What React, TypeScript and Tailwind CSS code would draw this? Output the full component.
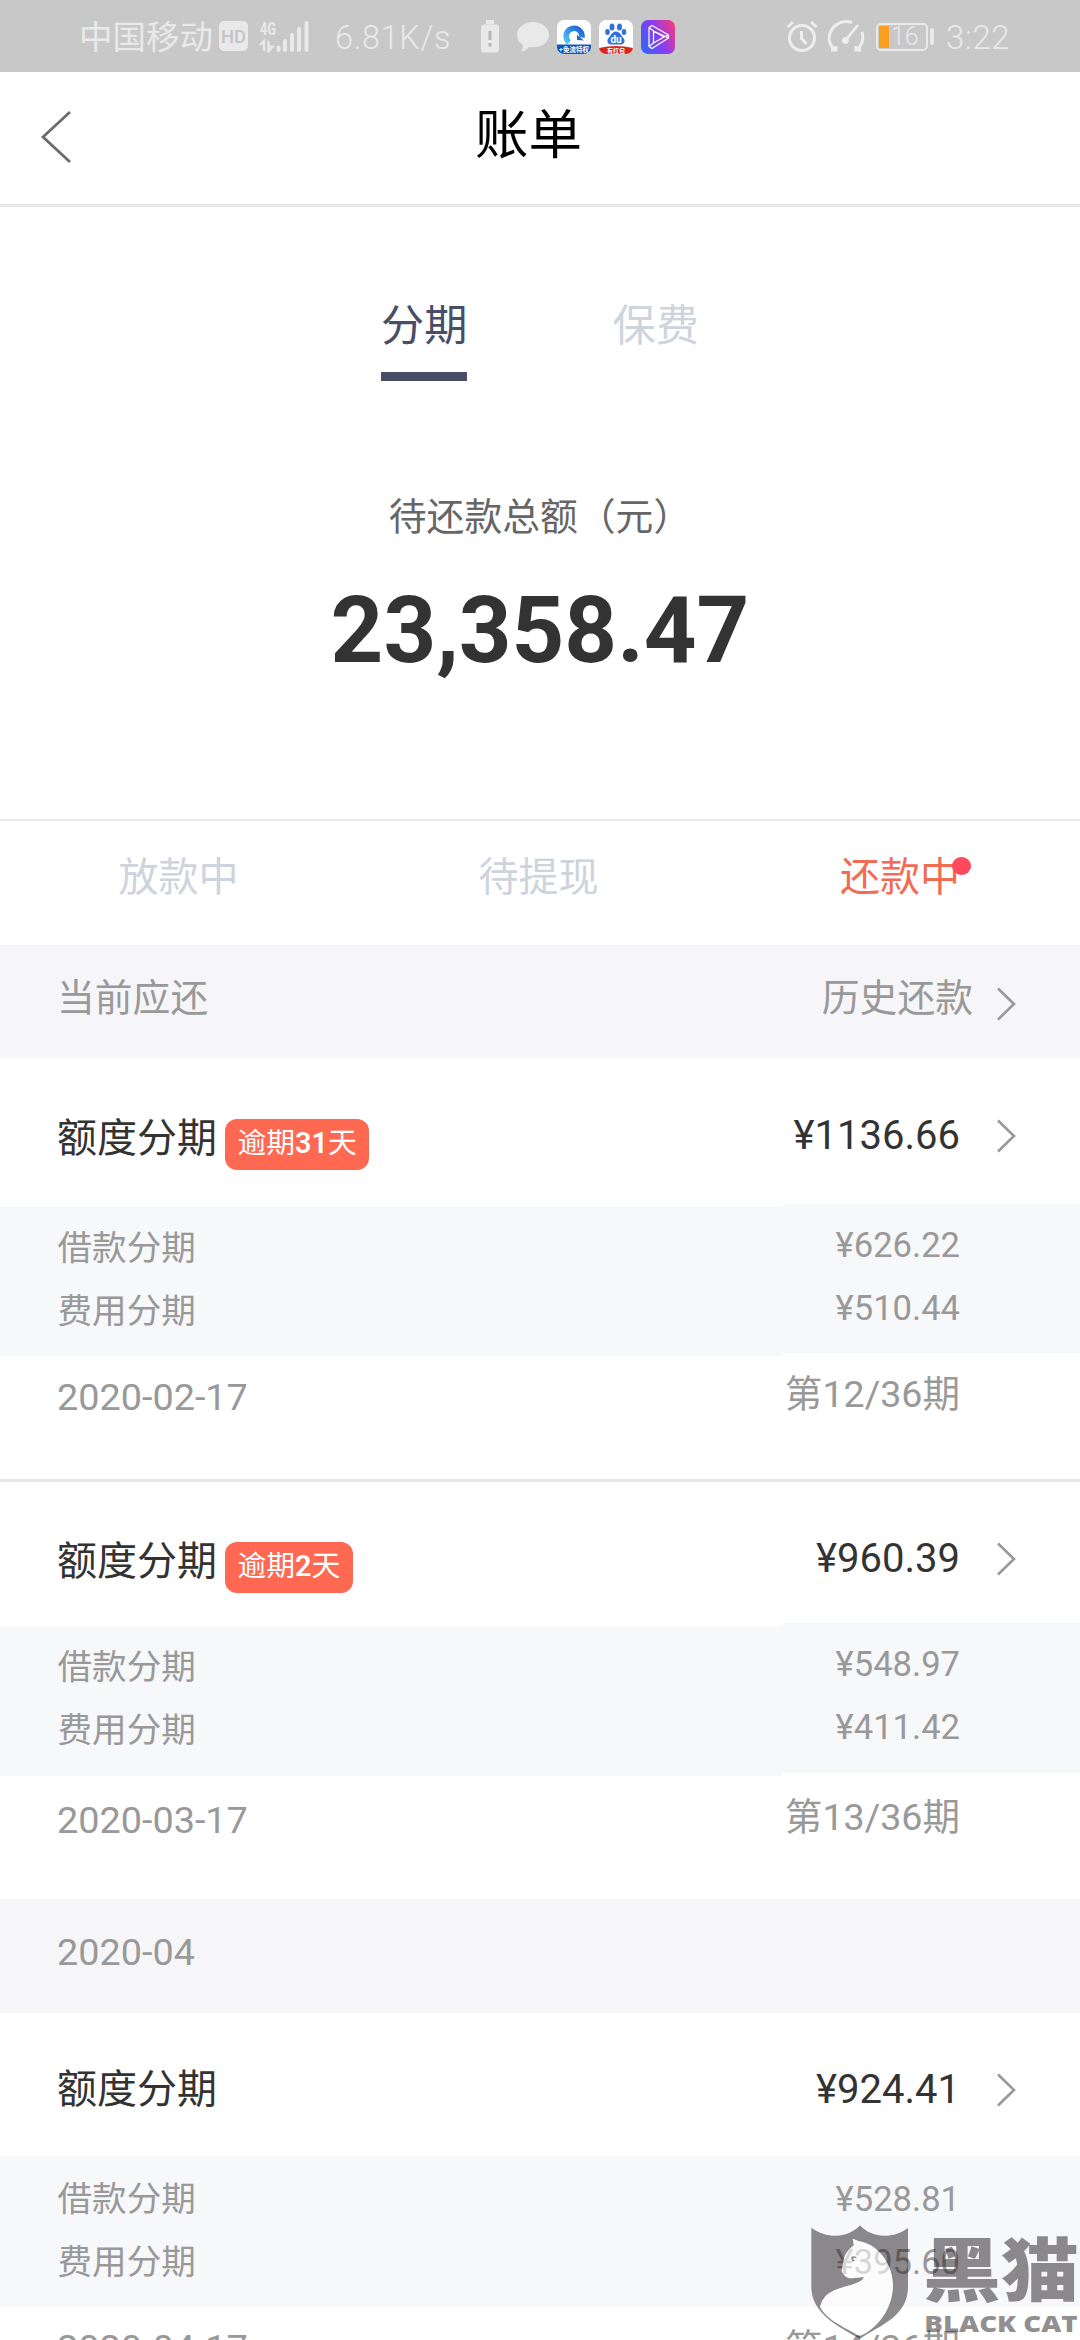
import React from "react";

type Bill = {
  overdueDays?: number;
  amount: string;
  loan: string;
  fee: string;
  date: string;
  period: string;
  row: string;
  titlePad: string;
  amountPad: string;
  leftHead: string;
  rightHead: string;
  detail: string;
  foot: string;
};

const bills: Bill[] = [
  {
    overdueDays: 31, amount: "¥1136.66", loan: "¥626.22", fee: "¥510.44",
    date: "2020-02-17", period: "第12/36期",
    row: "h-[424px] border-b-3 border-[#e8e8e8]",
    titlePad: "pt-[61px]", amountPad: "pt-[58px]",
    leftHead: "h-[149px]", rightHead: "h-[146px]",
    detail: "h-[149px] pt-[10px]", foot: "pt-[21px]",
  },
  {
    overdueDays: 2, amount: "¥960.39", loan: "¥548.97", fee: "¥411.42",
    date: "2020-03-17", period: "第13/36期",
    row: "h-[417px]",
    titlePad: "pt-[60px]", amountPad: "pt-[57px]",
    leftHead: "h-[144px]", rightHead: "h-[141px]",
    detail: "h-[150px] pt-[10px]", foot: "pt-[24px]",
  },
  {
    amount: "¥924.41", loan: "¥528.81", fee: "¥395.60",
    date: "2020-04-17", period: "第14/36期",
    row: "h-[327px]",
    titlePad: "pt-[57px]", amountPad: "pt-[57px]",
    leftHead: "h-[143px]", rightHead: "h-[143px]",
    detail: "h-[151px] pt-[12px]", foot: "pt-[21px]",
  },
];

function Chevron({ className = "" }: { className?: string }) {
  return (
    <svg className={`h-[34px] w-[20px] shrink-0 ${className}`} viewBox="0 0 20 34" fill="none">
      <path d="M2 1.5 18 17 2 32.5" stroke="#999" strokeWidth="2.6" />
    </svg>
  );
}

function BillRow({ b }: { b: Bill }) {
  return (
    <div className={`flex bg-white ${b.row}`}>
      <div className="flex w-[783px] flex-col">
        <div className={`flex shrink-0 items-start pl-[57px] ${b.leftHead} ${b.titlePad}`}>
          <span className="text-[40px] leading-[40px] text-[#333]">额度分期</span>
          {b.overdueDays && (
            <span className="ml-2 h-[51px] rounded-xl bg-[#ff6851] px-[12.5px] text-[28.8px] leading-[48px] text-white">
              逾期<b className="font-semibold">{b.overdueDays}</b>天
            </span>
          )}
        </div>
        <div className={`shrink-0 bg-[#f7f8fa] pl-[57.5px] text-[34.6px] leading-[63px] text-[#999] ${b.detail}`}>
          <p>借款分期</p>
          <p>费用分期</p>
        </div>
        <p className={`pl-[57px] text-[37.8px] leading-[40px] text-[#999] ${b.foot}`}>{b.date}</p>
      </div>
      <div className="flex flex-1 flex-col">
        <div className={`flex shrink-0 items-start justify-end pr-[64px] ${b.rightHead} ${b.amountPad}`}>
          <span className="text-[40px] leading-[40px] text-[#333]">{b.amount}</span>
          <Chevron className="mt-[3px] ml-[36px]" />
        </div>
        <div className={`shrink-0 bg-[#f7f8fa] pr-[120px] text-right text-[34.6px] leading-[63px] text-[#999] ${b.detail}`}>
          <p>{b.loan}</p>
          <p>{b.fee}</p>
        </div>
        <p className={`pr-[120px] text-right text-[37.6px] leading-[40px] whitespace-nowrap text-[#999] ${b.foot}`}>{b.period}</p>
      </div>
    </div>
  );
}

function StatusBar() {
  return (
    <header className="flex h-[72px] shrink-0 items-center bg-[#c8c8c8] pl-[79px] text-[#e9e9e9]">
      <span className="w-[139px] pt-[3px] text-[33.5px] leading-[44px] whitespace-nowrap">中国移动</span>
      <svg className="h-[32px] w-[31px]" viewBox="0 0 31 32">
        <rect x="1" y="1" width="29" height="30" rx="5" fill="#e9e9e9" />
        <text x="15.5" y="22.5" textAnchor="middle" fontSize="18.5" fontWeight="500" fill="#c4c4c4" fontFamily="Roboto">HD</text>
      </svg>
      <svg className="ml-[10px] h-[34px] w-[52px]" viewBox="0 0 52 34" fill="#e9e9e9">
        <text x="1" y="15.5" fontSize="19" fontWeight="700" fontFamily="Roboto" textLength="16" lengthAdjust="spacingAndGlyphs">4G</text>
        <path d="M1 26l4-4v10M9.500 22v10l4-4-4-1" stroke="#e9e9e9" strokeWidth="2.400" fill="none" />
        <path d="M19.500 28.500v2.500M26 22v9M33 16v15M40 10v21M47.500 4v27" stroke="#e9e9e9" strokeWidth="4" strokeLinecap="round" />
      </svg>
      <span className="ml-[24px] w-[116px] pt-[4px] text-[32.5px] leading-[40px] font-light whitespace-nowrap tracking-[0.6px]">6.81K/s</span>
      <svg className="ml-[30px] h-[34px] w-[18px]" viewBox="0 0 18 34">
        <rect x="5" y="1" width="8" height="4" fill="#e9e9e9" />
        <rect width="18" height="28" y="5.500" rx="3" fill="#e9e9e9" />
        <path d="M9 12v9M9 24v3.500" stroke="#b8b8b8" strokeWidth="3" />
      </svg>
      <svg className="mt-[2px] ml-[17px] h-[32px] w-[34px]" viewBox="0 0 34 32">
        <path d="M17 1C8 1 1 6.500 1 14c0 4.500 2 7.500 6 10 0 3-1 5-2 7 4-1 6-3 8-5 1 .2 2.500.3 4 .3 9 0 16-5 16-12.300S26 1 17 1Z" fill="#e9e9e9" />
      </svg>
      <svg className="mt-[2px] ml-[7px] h-[34px] w-[34px]" viewBox="0 0 34 34">
        <defs>
          <clipPath id="appA"><rect width="34" height="34" rx="7" /></clipPath>
          <linearGradient id="ring" x1="0" y1="1" x2="1" y2="0"><stop stopColor="#55c3f5" /><stop offset="1" stopColor="#1d62cf" /></linearGradient>
        </defs>
        <g clipPath="url(#appA)">
          <rect width="34" height="34" fill="#fff" />
          <path d="M12 22.500A8 8 0 1 1 25 17.500" stroke="url(#ring)" strokeWidth="5.500" fill="none" />
          <path d="M20 15l7 5.500-7-.500Z" fill="#2166cf" />
          <path d="M0 24.500h34V34H0Z" fill="#0c57b8" />
          <text x="17" y="31.500" textAnchor="middle" fontSize="6.500" fontWeight="700" fill="#fff" fontFamily="Noto Sans CJK SC">+免流特权</text>
        </g>
      </svg>
      <svg className="mt-[2px] ml-[8px] h-[34px] w-[34px]" viewBox="0 0 34 34">
        <defs><clipPath id="appB"><rect width="34" height="34" rx="7" /></clipPath></defs>
        <g clipPath="url(#appB)">
          <rect width="34" height="34" fill="#fff" />
          <g fill="#2f72dc">
            <ellipse cx="13" cy="7" rx="2.500" ry="3.500" /><ellipse cx="20.500" cy="7" rx="2.500" ry="3.500" />
            <ellipse cx="8.500" cy="12" rx="2.300" ry="3" /><ellipse cx="25" cy="12" rx="2.300" ry="3" />
            <path d="M17 11.500c4 0 5 4 7.500 6.500 2.500 3.500.5 7-4 6.500h-7c-4.500.5-6.500-3-4-6.500C12 15.500 13 11.500 17 11.500Z" />
          </g>
          <text x="17" y="23" textAnchor="middle" fontSize="10" fontWeight="700" fill="#fff" fontFamily="Roboto">du</text>
          <path d="M0 28Q17 24 34 28v6H0Z" fill="#d9261c" />
          <text x="17" y="32.500" textAnchor="middle" fontSize="6" fontWeight="700" fill="#fff" fontFamily="Noto Sans CJK SC">有红包</text>
        </g>
      </svg>
      <svg className="mt-[2px] ml-[8px] h-[34px] w-[34px]" viewBox="0 0 34 34">
        <defs>
          <linearGradient id="vid" x1="0" y1="0.700" x2="1" y2="0.200"><stop stopColor="#3b62f6" /><stop offset="0.500" stopColor="#8a3df0" /><stop offset="1" stopColor="#f53a86" /></linearGradient>
        </defs>
        <rect width="34" height="34" rx="7" fill="url(#vid)" />
        <path d="M8 7.500 11 5.500 27.500 15v3L11 28.500l-3-2ZM12.500 11v12L23 17ZM8 26.500 12.500 23M8 7.500l4.500 3.500M12.500 11l15 7M23 17l4.500-2" stroke="#fff" strokeWidth="1.200" fill="none" strokeLinejoin="round" />
      </svg>
      <svg className="ml-[111px] h-[34px] w-[32px]" viewBox="0 0 32 34" fill="none" stroke="#eee" strokeWidth="3">
        <circle cx="16" cy="19" r="12.500" />
        <path d="M15.500 12v7.500l5 5.500M1.500 8 7 3M30.500 8 25 3" />
      </svg>
      <svg className="ml-[9px] h-[34px] w-[38px]" viewBox="0 0 38 34" fill="none" stroke="#eee">
        <path d="M9 31.500C3 27 .5 20 3.500 13 7 5 16 .5 25 3.500M35 13c2 7 0 14.500-6 18.500M4 31h5v-4M34 31h-5v-4" strokeWidth="3" />
        <path d="M18 22 31 6" strokeWidth="2.600" />
        <circle cx="18.500" cy="21.500" r="3" fill="#eee" />
      </svg>
      <div className="mt-px ml-[11px] flex h-[28px] w-[52px] items-center rounded-[5px] border-2 border-[#e9e9e9] pl-px">
        <span className="h-[22px] w-[10px] bg-[#fa9f1e]" />
        <span className="ml-[2px] text-[25px] leading-[24px] font-light">16</span>
      </div>
      <span className="mt-px ml-[2px] h-[17px] w-[4px] rounded-sm bg-[#e9e9e9]" />
      <span className="ml-[12px] pt-[4px] text-[33px] leading-[40px] font-light whitespace-nowrap tracking-[0.6px]">3:22</span>
    </header>
  );
}

function Watermark() {
  return (
    <svg className="absolute right-0 bottom-0 h-[118px] w-[272px]" viewBox="84 246 816 354">
      <g fill="#282024" fillOpacity="0.52">
        <path fillRule="evenodd" d="M94 263C142 298 205 295 240 256 275 295 338 298 384 264V440C384 530 300 555 240 596 175 560 94 520 94 440ZM218 296L222 316C205 328 192 345 190 366L185 392C188 404 200 414 215 415L252 411C240 440 170 435 137 468Q124 482 120 500C145 545 195 560 238 588C290 570 345 500 338 425C334 365 290 312 237 304Z" />
        <text x="429" y="469" fontSize="208" fontWeight="900" fontFamily="Noto Sans CJK SC" textLength="468" lengthAdjust="spacingAndGlyphs">黑猫</text>
        <text x="433" y="576" fontSize="67" fontWeight="800" fontFamily="Open Sans" textLength="460" lengthAdjust="spacingAndGlyphs">BLACK CAT</text>
      </g>
      <path fill="#fff" fillOpacity="0.6" d="M218 296L222 316C205 328 192 345 190 366L185 392C188 404 200 414 215 415L252 411C240 440 170 435 137 468Q124 482 120 500C145 545 195 560 238 588C290 570 345 500 338 425C334 365 290 312 237 304Z" />
      <path d="M213 352Q223 345 230 353Q226 365 216 364Z" fill="#8e8a8d" />
      <circle cx="224" cy="357" r="4" fill="#fff" />
    </svg>
  );
}

export default function App() {
  return (
    <div className="relative flex h-[2340px] w-[1080px] flex-col overflow-hidden bg-white font-['Roboto','Noto_Sans_CJK_SC',sans-serif]">
      <StatusBar />
      <nav className="flex h-[135px] shrink-0 items-start border-b-3 border-[#e9e9e9] pt-[37px]">
        <svg className="mt-px ml-[40px] h-[54px] w-[32px]" viewBox="0 0 32 54" fill="none">
          <path d="M30 2 3 27l27 25" stroke="#6b6b6b" strokeWidth="2.800" />
        </svg>
        <h1 className="mr-[95px] flex-1 text-center text-[53.5px] leading-[54px] text-black">账单</h1>
      </nav>

      <section className="flex h-[612px] shrink-0 flex-col items-center">
        <div className="flex w-[318px] justify-between pt-[92px] text-[43.2px] leading-[56px]">
          <span className="h-[82px] border-b-9 border-[#464e68] text-[#464e68]">分期</span>
          <span className="text-[#ced4dc]">保费</span>
        </div>
        <p className="mt-[108px] text-[37.8px] leading-[56px] text-[#666]">待还款总额（元）</p>
        <p className="mt-[36px] text-[92px] leading-[100px] font-bold text-[#333]">23,358.47</p>
      </section>

      <div className="grid h-[126px] shrink-0 grid-cols-3 border-t-2 border-[#ebebeb] pt-[32px] text-center text-[40px] leading-[50px] text-[#ced4dc]">
        <span className="pr-[3px]">放款中</span>
        <span className="pr-[3px]">待提现</span>
        <span className="text-[#f26b55]">
          <span className="relative">
            还款中
            <i className="absolute top-[3px] -right-[11px] h-[18px] w-[19px] rounded-full bg-[#ff4a5c]" />
          </span>
        </span>
      </div>

      <div className="flex h-[113px] shrink-0 items-start justify-between bg-[#f6f6f8] pt-[33px] pr-[64px] pl-[57px] text-[37.800px] leading-[40px] text-[#999]">
        <span>当前应还</span>
        <span className="flex">
          历史还款
          <Chevron className="mt-[9px] ml-[23px]" />
        </span>
      </div>

      <BillRow b={bills[0]} />
      <BillRow b={bills[1]} />
      <div className="flex h-[114px] shrink-0 items-start bg-[#f6f6f8] pt-[33px] pl-[57px] text-[37.800px] leading-[40px] text-[#999]">
        2020-04
      </div>
      <BillRow b={bills[2]} />
      <Watermark />
    </div>
  );
}
